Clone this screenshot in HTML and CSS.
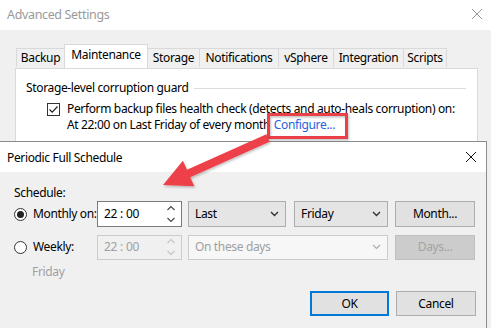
FILE: index.html
```html
<!DOCTYPE html>
<html>
<head>
<meta charset="utf-8">
<title>Advanced Settings</title>
<link rel="stylesheet" href="styles.css">
</head>
<body>
<div class="win">
  <div class="titlebar">
    <span class="title">Advanced Settings</span>
    <svg class="close close-gray" width="12" height="12" viewBox="0 0 12 12"><path d="M1 1 L11 11 M11 1 L1 11" /></svg>
  </div>
  <div class="winbody">
    <div class="tabs">
      <div class="tab t-backup">Backup</div>
      <div class="tab sel t-maint">Maintenance</div>
      <div class="tab t-storage">Storage</div>
      <div class="tab t-notif">Notifications</div>
      <div class="tab t-vs">vSphere</div>
      <div class="tab t-int">Integration</div>
      <div class="tab t-scr">Scripts</div>
    </div>
    <div class="panel">
      <div class="group">
        <span>Storage-level corruption guard</span>
        <div class="rule"></div>
      </div>
      <div class="check-row">
        <span class="checkbox"><svg width="11" height="11" viewBox="0 0 11 11"><path d="M1.5 5.5 L4.2 8.2 L9.5 2.5" /></svg></span>
        <div class="check-text">
          <div>Perform backup files health check (detects and auto-heals corruption) on:</div>
          <div>At 22:00 on Last Friday of every month <a class="link">Configure...</a></div>
        </div>
      </div>
    </div>
  </div>
</div>

<div class="dialog">
  <div class="dtitlebar">
    <span class="dtitle">Periodic Full Schedule</span>
    <svg class="close close-black" width="12" height="12" viewBox="0 0 12 12"><path d="M1 1 L11 11 M11 1 L1 11" /></svg>
  </div>
  <div class="dbody">
    <div class="label">Schedule:</div>
    <div class="row">
      <div class="opt">
        <span class="radio on"></span>
        <span>Monthly on:</span>
      </div>
      <div class="time">
        <span class="tval">22<span class="colon">:</span>00</span>
        <svg class="spin" width="10" height="18" viewBox="0 0 10 18"><path d="M1.5 5 L5 1.5 L8.5 5 M1.5 13 L5 16.5 L8.5 13" /></svg>
      </div>
      <div class="combo w-last"><span>Last</span><svg class="chev" width="9" height="6" viewBox="0 0 9 6"><path d="M1 1 L4.5 4.5 L8 1" /></svg></div>
      <div class="combo w-fri"><span>Friday</span><svg class="chev" width="9" height="6" viewBox="0 0 9 6"><path d="M1 1 L4.5 4.5 L8 1" /></svg></div>
      <div class="btn">Month...</div>
    </div>
    <div class="row row2">
      <div class="opt">
        <span class="radio"></span>
        <span>Weekly:</span>
      </div>
      <div class="time dis">
        <span class="tval">22<span class="colon">:</span>00</span>
        <svg class="spin" width="10" height="18" viewBox="0 0 10 18"><path d="M1.5 5 L5 1.5 L8.5 5 M1.5 13 L5 16.5 L8.5 13" /></svg>
      </div>
      <div class="combo dis w-days"><span>On these days</span><svg class="chev" width="9" height="6" viewBox="0 0 9 6"><path d="M1 1 L4.5 4.5 L8 1" /></svg></div>
      <div class="btn dis">Days...</div>
    </div>
    <div class="sub">Friday</div>
    <div class="actions">
      <div class="btn default">OK</div>
      <div class="btn">Cancel</div>
    </div>
  </div>
</div>

<svg class="overlay" width="491" height="328" viewBox="0 0 491 328">
  <defs>
    <filter id="sh" x="-20%" y="-20%" width="140%" height="140%">
      <feDropShadow dx="1" dy="1.5" stdDeviation="1.2" flood-color="#000" flood-opacity="0.25"/>
    </filter>
  </defs>
  <rect x="268.5" y="114.5" width="78" height="23" fill="none" stroke="#ec3f49" stroke-width="3" filter="url(#sh)"/>
  <polygon points="266.4,134.3 187,169.8 182.9,160.7 163,185 194.3,186.3 190.2,177.2 269.6,141.7" fill="#ee3f48" filter="url(#sh)"/>
</svg>
</body>
</html>
```
FILE: styles.css
```css
* { box-sizing: border-box; }
html, body { margin: 0; padding: 0; }
body {
  width: 491px;
  height: 328px;
  overflow: hidden;
  position: relative;
  font-family: "Noto Sans", "Segoe UI", sans-serif;
  font-size: 12px;
  letter-spacing: -0.35px;
  color: #000;
  background: #f0f0f0;
}

.win { width: 491px; height: 328px; background: #f0f0f0; overflow: hidden; }
.titlebar {
  height: 30px;
  background: #fff;
  display: flex;
  align-items: center;
  justify-content: space-between;
  padding: 0 8px 2px 7px;
}
.title { color: #9a9a9a; font-size: 12.5px; }
.close path { fill: none; stroke-width: 1; }
.close-gray path { stroke: #9a9a9a; }
.close-black path { stroke: #111; }

.winbody { padding: 15px 0 0 15px; }
.tabs {
  display: flex;
  align-items: flex-end;
  height: 23px;
  margin-left: 1px;
  position: relative;
  z-index: 2;
}
.tab {
  height: 19px;
  margin-bottom: 1px;
  border: 1px solid #d9d9d9;
  border-bottom: none;
  background: #f0f0f0;
  display: flex;
  align-items: center;
  justify-content: center;
  margin-left: -1px;
  white-space: nowrap;
  line-height: 16px;
}
.tab:first-child { margin-left: 0; }
.tab.sel {
  height: 24px;
  margin-bottom: 0;
  background: #fff;
  padding-bottom: 3px;
}
.t-backup { width: 49px; }
.t-maint { width: 84px; }
.t-storage { width: 53px; }
.t-notif { width: 80px; }
.t-vs { width: 56px; }
.t-int { width: 71px; }
.t-scr { width: 44px; }

.panel {
  width: 463px;
  height: 261px;
  background: #fff;
  border: 1px solid #d9d9d9;
  padding: 11px 11px 0 10px;
  position: relative;
  z-index: 1;
}
.group {
  display: flex;
  align-items: center;
  line-height: 16px;
  gap: 6px;
}
.rule { flex: 1; height: 1px; background: #dcdcdc; }
.check-row {
  display: flex;
  margin-top: 5px;
  padding-left: 21px;
  line-height: 16px;
}
.checkbox {
  width: 13px;
  height: 13px;
  border: 1px solid #333;
  margin-top: 2px;
  margin-right: 7px;
  display: flex;
  align-items: center;
  justify-content: center;
  flex: none;
}
.checkbox path { fill: none; stroke: #222; stroke-width: 1.2; }
.check-text { white-space: nowrap; }
.link { color: #1f63e0; margin-left: 1px; }

.dialog {
  position: absolute;
  left: -1px;
  top: 141px;
  width: 488px;
  height: 187px;
  border: 1px solid #8c8c8c;
  border-bottom: none;
  background: #f0f0f0;
  z-index: 5;
  overflow: hidden;
}
.dtitlebar {
  height: 30px;
  background: #fff;
  display: flex;
  align-items: center;
  justify-content: space-between;
  padding: 0 9px 0 7px;
}
.dbody { padding: 13px 10px 0 14px; line-height: 16px; }
.label { height: 16px; }
.row {
  display: flex;
  align-items: center;
  height: 26px;
}
.row2 { margin-top: 7px; }
.opt {
  width: 83px;
  display: flex;
  align-items: center;
  gap: 6px;
  white-space: nowrap;
}
.radio {
  width: 13px;
  height: 13px;
  border: 1px solid #333;
  border-radius: 50%;
  background: #fff;
  flex: none;
  display: flex;
  align-items: center;
  justify-content: center;
}
.radio.on::after {
  content: "";
  width: 7px;
  height: 7px;
  border-radius: 50%;
  background: #222;
}
.time {
  width: 85px;
  height: 26px;
  border: 1px solid #7a7a7a;
  background: #fff;
  display: flex;
  align-items: center;
  justify-content: space-between;
  padding: 0 5px 0 6px;
  margin-right: 6px;
}
.colon { padding: 0 3px; }
.spin path { fill: none; stroke: #444; stroke-width: 1.1; }
.time.dis { border-color: #cccccc; background: #f0f0f0; color: #a0a0a0; height: 25px; }
.time.dis .spin path { stroke: #c4c4c4; }
.combo {
  height: 26px;
  border: 1px solid #adadad;
  background: #e5e5e5;
  display: flex;
  align-items: center;
  justify-content: space-between;
  padding: 0 6px 0 6px;
  margin-right: 8px;
}
.w-last { width: 98px; }
.w-fri { width: 94px; margin-right: 7px; }
.w-days { width: 200px; margin-right: 7px; }
.chev path { fill: none; stroke: #333; stroke-width: 1.4; }
.combo.dis { border-color: #cccccc; background: #f7f7f7; color: #a0a0a0; height: 25px; }
.combo.dis .chev path { stroke: #aaa; stroke-width: 1.1; }
.btn {
  width: 80px;
  height: 26px;
  border: 1px solid #adadad;
  background: #e1e1e1;
  display: flex;
  align-items: center;
  justify-content: center;
}
.btn.dis { background: #cccccc; border-color: #bfbfbf; color: #a3a3a3; height: 25px; }
.sub { color: #a0a0a0; margin-top: 4px; padding-left: 18px; height: 16px; }
.actions {
  display: flex;
  justify-content: flex-end;
  gap: 7px;
  margin-top: 11px;
}
.actions .btn { height: 25px; }
.btn.default { width: 79px; border: 2px solid #0078d7; }

.overlay {
  position: absolute;
  left: 0;
  top: 0;
  z-index: 10;
  pointer-events: none;
}
```
